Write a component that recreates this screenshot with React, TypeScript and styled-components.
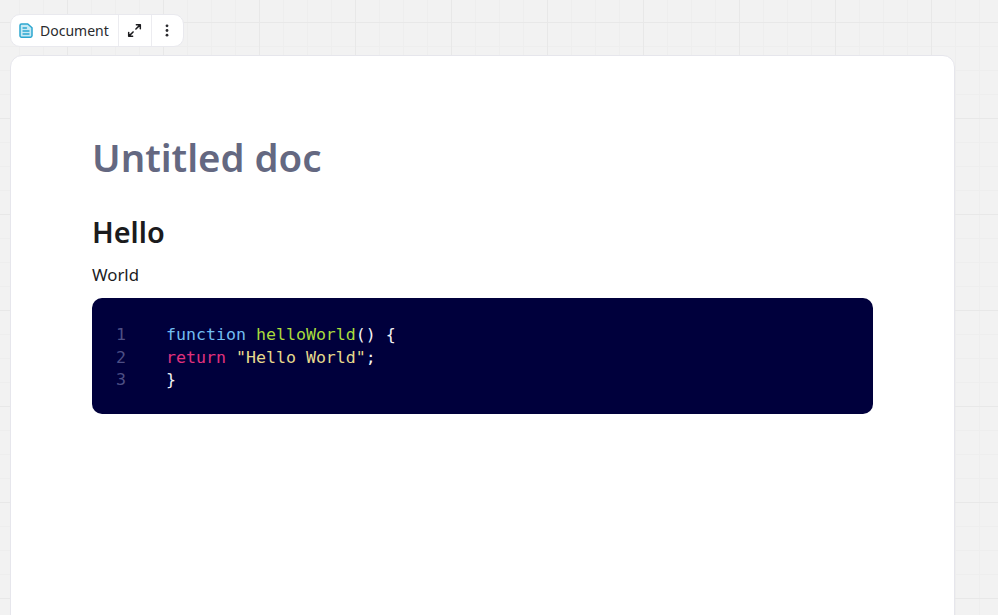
import * as React from 'react';
import styled, { createGlobalStyle } from 'styled-components';

const uiFont = `"Noto Sans", "Open Sans", sans-serif`;
const monoFont = `"DejaVu Sans Mono", "Liberation Mono", monospace`;

const GlobalStyle = createGlobalStyle`
  html, body {
    margin: 0;
    padding: 0;
    height: 100%;
    overflow: hidden;
    background: #f2f2f2;
  }
`;

const Canvas = styled.div`
  box-sizing: border-box;
  width: 998px;
  height: 615px;
  overflow: hidden;
  display: flex;
  flex-direction: column;
  gap: 8px;
  padding: 14px 43px 0 10px;
  font-family: ${uiFont};
  background-color: #f2f2f2;
  background-image:
    linear-gradient(to right, #e8e8e8 1px, transparent 1px),
    linear-gradient(to bottom, #e8e8e8 1px, transparent 1px),
    linear-gradient(to right, #eeeeee 1px, transparent 1px),
    linear-gradient(to bottom, #eeeeee 1px, transparent 1px);
  background-size: 96px 96px, 96px 96px, 24px 24px, 24px 24px;
  background-position: 67px 22px, 67px 22px, 19px 22px, 19px 22px;
`;

const Toolbar = styled.div`
  box-sizing: border-box;
  align-self: flex-start;
  flex: 0 0 auto;
  display: flex;
  height: 33px;
  background: #fff;
  border: 1px solid #e9e9ee;
  border-radius: 10px;
`;

const ToolLabel = styled.div`
  display: flex;
  align-items: center;
  gap: 7px;
  padding: 0 9px 0 8px;
  font-size: 14px;
  color: #2a2a2e;
`;

const ToolButton = styled.div<{ $width: number }>`
  display: flex;
  align-items: center;
  justify-content: center;
  width: ${(p) => p.$width}px;
  border-left: 1px solid #ececf0;
`;

const Card = styled.main`
  box-sizing: border-box;
  flex: 1 0 auto;
  height: 600px;
  padding: 76px 81px 0;
  background: #fff;
  border: 1px solid #e6e6ec;
  border-radius: 12px;
`;

const Title = styled.h1`
  margin: 0;
  font-size: 38.4px;
  line-height: 50px;
  font-weight: 600;
  color: #646881;
`;

const Heading = styled.h2`
  margin: 30px 0 0;
  font-size: 28.8px;
  line-height: 40px;
  font-weight: 600;
  color: #1b1b1d;
`;

const Paragraph = styled.p`
  margin: 11px 0 0;
  font-size: 16.8px;
  line-height: 24px;
  color: #1b1b1d;
`;

const CodeBlock = styled.div`
  display: grid;
  grid-template-columns: 34px 1fr;
  column-gap: 40px;
  box-sizing: border-box;
  height: 116px;
  margin-top: 11px;
  padding: 26px 0 24px;
  background: #00003c;
  border-radius: 10px;
  font-family: ${monoFont};
  font-size: 16.6px;
  line-height: 22.5px;
  color: #f4f4f4;
`;

const LineNumbers = styled.div`
  text-align: right;
  color: #4d4f85;
`;

const CodeLines = styled.div`
  white-space: pre;
`;

const Token = styled.span<{ $color: string }>`
  color: ${(p) => p.$color};
`;

const DocIcon = () => (
  <svg width="14" height="15" viewBox="0 0 14 15" fill="none">
    <path d="M2.5 1h6.3L13 4.8v8A1.5 1.5 0 0 1 11.5 14.2h-9A1.5 1.5 0 0 1 1 12.7V2.5A1.5 1.5 0 0 1 2.5 1Z" fill="#c6e9f4" stroke="#2ba6cf" strokeWidth="1.5" strokeLinejoin="round" />
    <path d="M4 5h3.5M4 8h6M4 11h6" stroke="#2ba6cf" strokeWidth="1.3" strokeLinecap="round" />
  </svg>
);

const ExpandIcon = () => (
  <svg width="15" height="15" viewBox="0 0 16 16" fill="none" stroke="#1c1c1f" strokeWidth="1.6" strokeLinecap="round" strokeLinejoin="round">
    <path d="M9.5 6.5 14 2M10 1.8h4.2V6M6.5 9.5 2 14M6 14.2H1.8V10" />
  </svg>
);

const MoreIcon = () => (
  <svg width="4" height="13" viewBox="0 0 4 14" fill="#2a2a2e">
    <circle cx="2" cy="2" r="1.5" />
    <circle cx="2" cy="7" r="1.5" />
    <circle cx="2" cy="12" r="1.5" />
  </svg>
);

const App = () => (
  <Canvas>
    <GlobalStyle />
    <Toolbar>
      <ToolLabel>
        <DocIcon />
        Document
      </ToolLabel>
      <ToolButton $width={32}><ExpandIcon /></ToolButton>
      <ToolButton $width={31}><MoreIcon /></ToolButton>
    </Toolbar>
    <Card>
      <Title>Untitled doc</Title>
      <Heading>Hello</Heading>
      <Paragraph>World</Paragraph>
      <CodeBlock>
        <LineNumbers>
          <div>1</div>
          <div>2</div>
          <div>3</div>
        </LineNumbers>
        <CodeLines>
          <div>
            <Token $color="#71bdf0">function</Token> <Token $color="#a9dc3c">helloWorld</Token>() {'{'}
          </div>
          <div>
            <Token $color="#e0317c">return</Token> <Token $color="#e6d98c">"Hello World"</Token>;
          </div>
          <div>{'}'}</div>
        </CodeLines>
      </CodeBlock>
    </Card>
  </Canvas>
);

export default App;
